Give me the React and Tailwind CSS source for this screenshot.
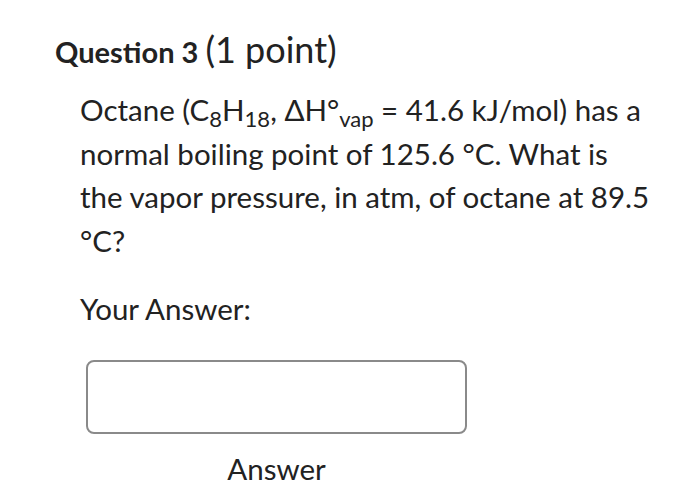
import React from 'react';

const App = () => {
    return (
        <div className="w-[700px] h-[493px] bg-white text-[#222] overflow-hidden" style={{ fontFamily: 'Lato, "Liberation Sans", sans-serif' }}>
            <div className="pl-[55px] pt-[29px]">
                <h2 className="leading-[40px] whitespace-nowrap">
                    <span className="font-bold text-[29px]">Question 3</span><span className="text-[36px] ml-[7px]">(1 point)</span>
                </h2>
            </div>
            <div className="pl-[80px] pt-[11px] text-[29.5px] leading-[43.5px]">
                <p className="w-[575px]">
                    Octane (C<sub className="text-[22px] leading-none">8</sub>H<sub className="text-[22px] leading-none">18</sub>, ΔH°<sub className="text-[22px] leading-none">vap</sub> = 41.6 kJ/mol) has a normal boiling point of 125.6 °C. What is the vapor pressure, in atm, of octane at 89.5 °C?
                </p>
                <p className="mt-[25px]">Your Answer:</p>
            </div>
            <div className="pl-[86px] pt-[29px]">
                <div className="w-[381px] h-[74px] border-2 border-[#8a8a8a] rounded-[8px]"></div>
                <div className="text-center text-[29.5px] leading-[43px] mt-[13px] w-[381px]">Answer</div>
            </div>
        </div>
    );
};

export default App;
